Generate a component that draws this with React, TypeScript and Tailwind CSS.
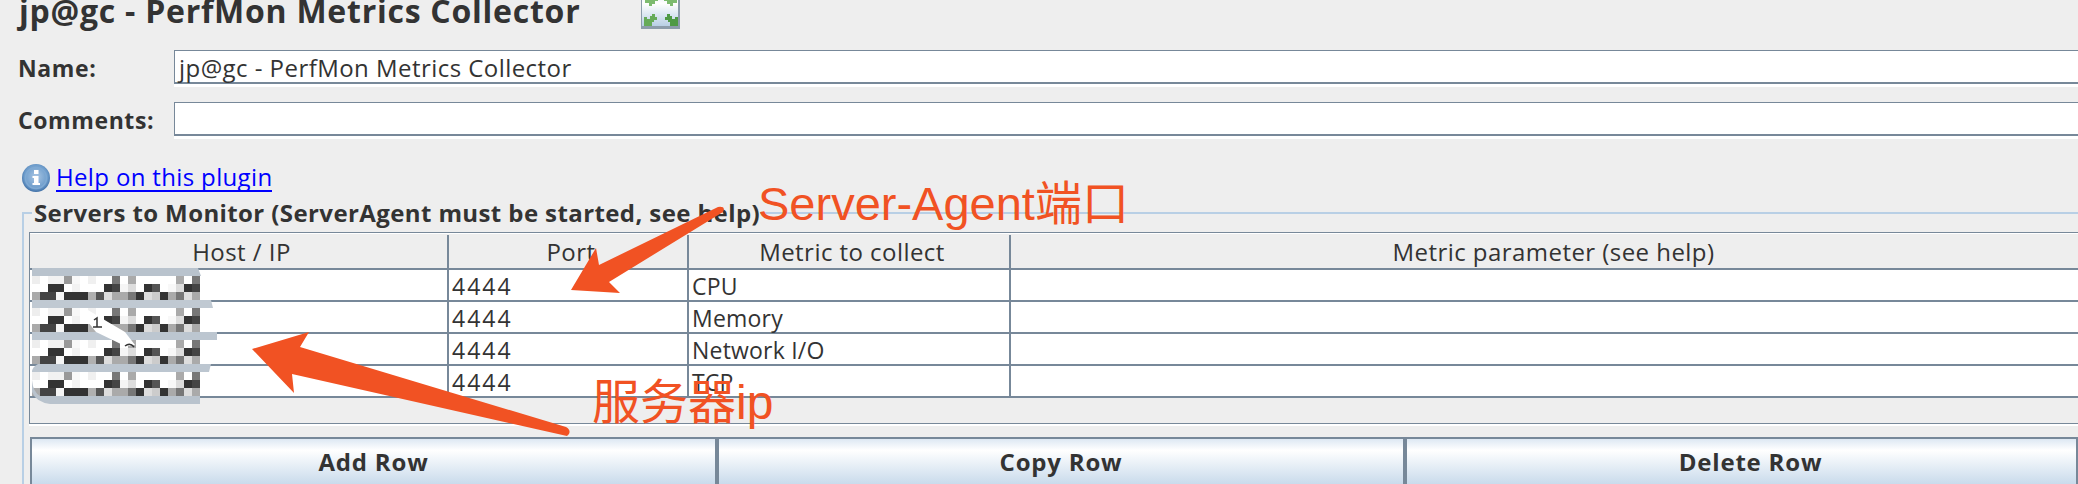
const mosaic = [
  ["#eee", "#fff", "#f2f2f2", "#f2f2f2", "#999", "#f8f8f8", "#fff", "#f0f0f0", "#fff", "#fff", "#777", "#fff", "#aaa", "#fff", "#fff", "#fff", "#fff", "#fff", "#aaa", "#fff", "#777"],
  ["#fff", "#fff", "#333", "#333", "#fff", "#f2f2f2", "#fff", "#fff", "#fff", "#333", "#444", "#f5f5f5", "#ddd", "#fff", "#333", "#555", "#fff", "#f8f8f8", "#ddd", "#333", "#444"],
  ["#aaa", "#444", "#444", "#f5f5f5", "#333", "#333", "#333", "#b0b0b0", "#555", "#ddd", "#aaa", "#aaa", "#777", "#333", "#ddd", "#ccc", "#333", "#aaa", "#777", "#ddd", "#aaa"],
];

const rows = [
  ["4444", "CPU"],
  ["4444", "Memory"],
  ["4444", "Network I/O"],
  ["4444", "TCP"],
];

const Redaction = () => (
  <svg className="absolute left-[28px] top-[264px]" width="200" height="145" viewBox="28 264 200 145">
    {[276, 308, 340, 372].map((y) =>
      mosaic.map((line, r) =>
        line.map((fill, c) => (
          <rect key={`${y}-${r}-${c}`} x={32 + c * 8} y={y + r * 8} width="8" height="8" fill={fill} />
        ))
      )
    )}
    <path d="M32 268H198L201 276H32Z" fill="#b9c3cd" />
    <path d="M32 300H211L213 308H32Z" fill="#c0c9d2" />
    <path d="M32 332H217V340H32Z" fill="#bcc6d0" />
    <path d="M38 364H211L209 372H32Q32 367 38 364Z" fill="#bcc6d0" />
    <path d="M32 380Q33 392 40 396H200V404H50Q36 402 32 392Z" fill="#b9c3cd" />
    <path d="M88 310L108 322L125 332L135 345L125 346L96 332L88 322Z" fill="#fff" />
    <path d="M93 327H102M97 327V318L94 320" stroke="#333" strokeWidth="1.5" fill="none" />
    <path d="M125 346Q130 342 134 347" stroke="#333" strokeWidth="1.5" fill="none" />
  </svg>
);

const ExpandIcon = () => (
  <svg className="ml-[61px] -mt-[9px] shrink-0" width="39" height="38" viewBox="0 0 39 38">
    <defs>
      <linearGradient id="expandBg" x1="0" y1="0" x2="0" y2="1">
        <stop offset="0" stopColor="#dde8f3" />
        <stop offset="0.35" stopColor="#ffffff" />
        <stop offset="1" stopColor="#b8cfe5" />
      </linearGradient>
    </defs>
    <rect x="0" y="0" width="39" height="38" fill="#8c9cab" />
    <rect x="1" y="0" width="36" height="35" fill="url(#expandBg)" />
    <path d="M4 5H17V10H14V13H11V15H8V12H4Z" fill="#7dbb70" />
    <path d="M36 5H23V10H26V13H29V15H32V12H36Z" fill="#7dbb70" />
    <path d="M3 35V26H6V28H9V25H11V23H14V26H16V29H13V31H11V35Z" fill="#66ab59" />
    <path d="M37 35V26H34V28H31V25H29V23H26V26H24V29H27V31H29V35Z" fill="#4f9a45" />
  </svg>
);

const InfoIcon = () => (
  <svg width="28" height="28" viewBox="0 0 28 28" className="shrink-0">
    <defs>
      <radialGradient id="infoBg" cx="0.5" cy="0.45" r="0.6">
        <stop offset="0" stopColor="#a9c6e4" />
        <stop offset="0.7" stopColor="#6d9ccb" />
        <stop offset="1" stopColor="#2f5f99" />
      </radialGradient>
    </defs>
    <circle cx="14" cy="14" r="14" fill="url(#infoBg)" />
    <circle cx="14" cy="14" r="10.5" fill="none" stroke="#7fa9d3" strokeWidth="1.5" />
    <rect x="12" y="6" width="4.5" height="4" fill="#fff" />
    <path d="M10.5 12H16.5V19H18V21H10.5V19H12V14H10.5Z" fill="#fff" />
  </svg>
);

const Field = ({ label, value }: { label: string; value?: string }) => (
  <div className="flex h-[37px] items-start">
    <div className="w-[174px] shrink-0 pl-[18px] text-[23px] font-bold leading-[37px] tracking-[0.6px]">{label}</div>
    <div className="h-[37px] flex-1 border-b-[3px] border-white">
      <div className="h-[34px] border-t border-l border-b-2 border-[#778899] bg-white pl-[4px] text-[24px] leading-[34px] tracking-[0.45px]">
        {value}
      </div>
    </div>
  </div>
);

const App = () => {
  return (
    <div className="relative h-[484px] w-[2078px] overflow-hidden bg-[#eeeeee] text-[#333333] [font-family:'Open_Sans','Noto_Sans',sans-serif]">
      <div className="flex h-[29px] items-start">
        <div className="-mt-[9px] pl-[19px] text-[32px] font-bold leading-[40px] tracking-[0.75px] whitespace-nowrap">
          jp@gc - PerfMon Metrics Collector
        </div>
        <ExpandIcon />
      </div>

      <div className="mt-[21px]">
        <Field label="Name:" value="jp@gc - PerfMon Metrics Collector" />
      </div>
      <div className="mt-[15px]">
        <Field label="Comments:" />
      </div>

      <div className="mt-[25px] flex h-[28px] items-center gap-[6px] pl-[22px]">
        <InfoIcon />
        <a className="border-b-2 border-[#0000ff] pb-[1px] text-[24px] leading-[25px] tracking-[0.35px] text-[#0000ff]">Help on this plugin</a>
      </div>

      <div className="relative ml-[22px] mt-[20px] border-l-[2px] border-t-[2px] border-[#b8cfe5] pl-[5px] pt-[18px]">
        <div className="absolute left-[8px] -top-[16px] bg-[#eeeeee] pl-[2px] text-[24px] font-bold leading-[30px] tracking-[0.4px] whitespace-nowrap">
          Servers to Monitor (ServerAgent must be started, see help)
        </div>

        <div className="border-l border-b border-t border-[#778899] shadow-[0_2px_0_#ffffff]">
          <div className="grid h-[37px] grid-cols-[419px_240px_322px_1fr] border-t border-b-2 border-t-white border-b-[#778899] pt-[1px] text-center text-[24px] leading-[34px] tracking-[0.45px]">
            <div className="border-r-2 border-[#778899] pl-[6px]">Host / IP</div>
            <div className="border-r-2 border-[#778899] pl-[6px]">Port</div>
            <div className="border-r-2 border-[#778899] pl-[6px]">Metric to collect</div>
            <div className="pl-[18px]">Metric parameter (see help)</div>
          </div>
          {rows.map((row, i) => (
            <div key={i} className="grid h-[32px] grid-cols-[419px_240px_322px_1fr] border-b-2 border-[#778899] bg-white text-[23px] leading-[32px] tracking-[0.2px]">
              <div className="border-r-2 border-[#778899]" />
              <div className="border-r-2 border-[#778899] pl-[3px] tracking-[2px]">{row[0]}</div>
              <div className="border-r-2 border-[#778899] pl-[3px]">{row[1]}</div>
              <div />
            </div>
          ))}
          <div className="h-[25px]" />
        </div>

        <div className="mt-[13px] grid grid-cols-[687px_688px_1fr] pl-[1px]">
          {["Add Row", "Copy Row", "Delete Row"].map((label, i) => (
            <div
              key={label}
              className={`flex h-[60px] justify-center border-2 border-[#778899] bg-linear-to-b from-[#dde8f3] via-white via-[20%] to-[#b8cfe5] pt-[8px] text-[24px] font-bold leading-[30px] tracking-[0.8px] ${i === 2 ? "pl-[18px]" : ""}`}
            >
              {label}
            </div>
          ))}
        </div>
      </div>

      <Redaction />

      <svg className="absolute left-0 top-0" width="800" height="484" viewBox="0 0 800 484">
        <path d="M571 290L596 248L599 265L718 207Q726 206 723 212L609 282L620 293Z" fill="#f15223" />
        <path d="M252 349L309 332L300 347L566 427Q571 430 569 434L567 436L292 374L294 393Z" fill="#f15223" />
      </svg>
      <div className="absolute left-[758px] top-[177px] text-[47px] leading-[54px] text-[#f15223] whitespace-nowrap [font-family:'Liberation_Sans','Noto_Sans_CJK_SC',sans-serif]">
        Server-Agent端口
      </div>
      <div className="absolute left-[592px] top-[376px] text-[48px] leading-[54px] text-[#f15223] whitespace-nowrap [font-family:'Liberation_Sans','Noto_Sans_CJK_SC',sans-serif]">
        服务器ip
      </div>
    </div>
  );
};

export default App;
